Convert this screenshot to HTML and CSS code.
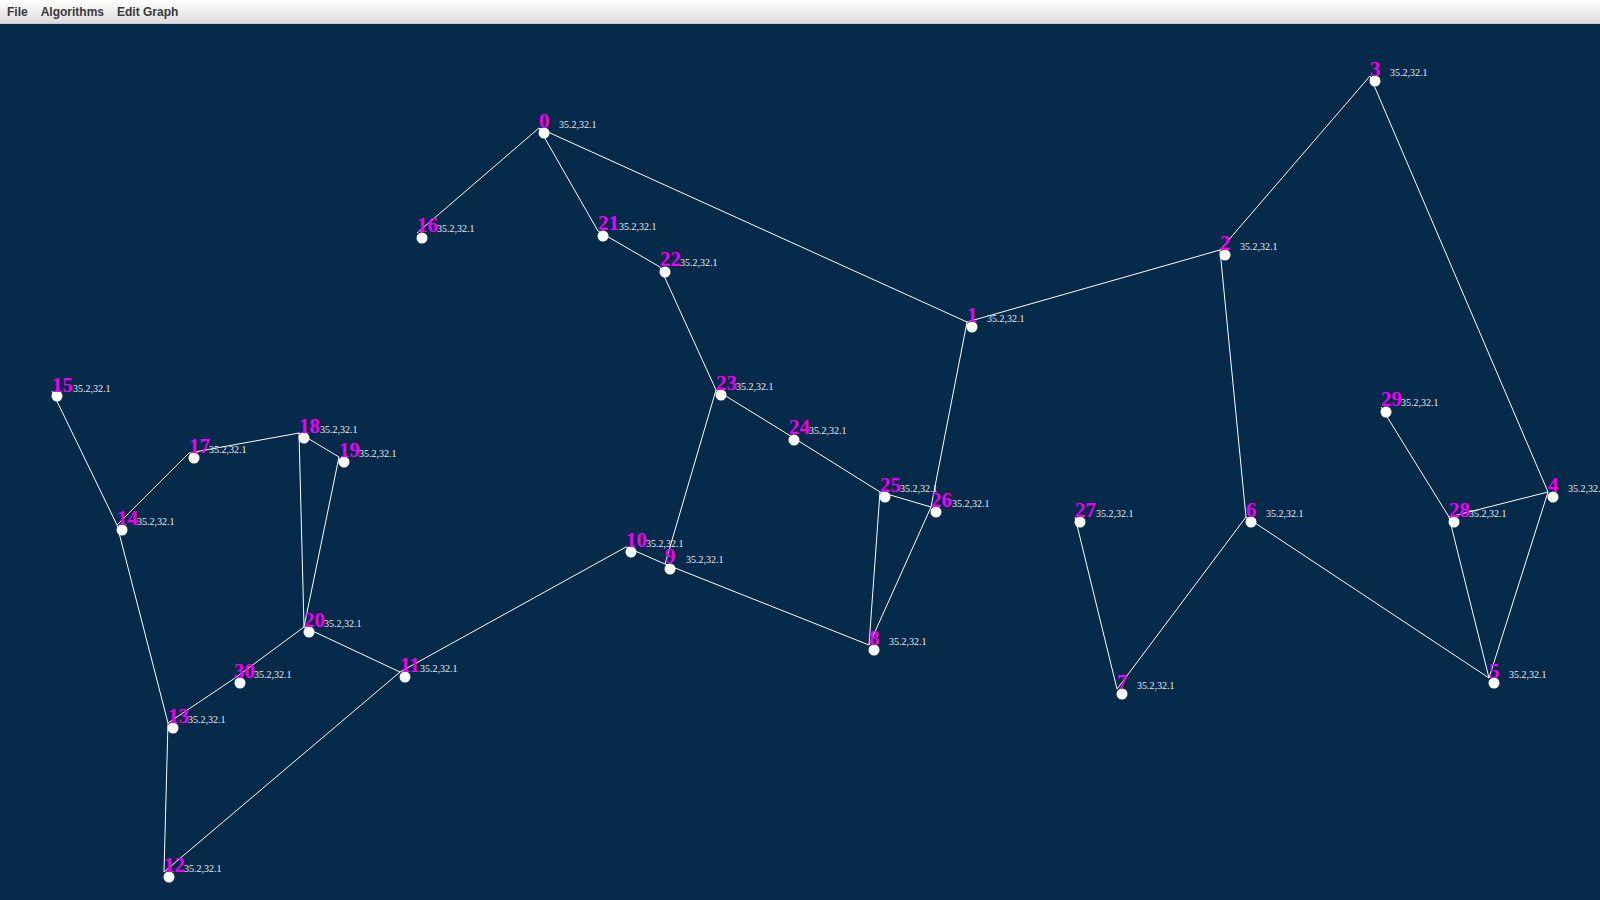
FILE: index.html
```html
<!DOCTYPE html>
<html>
<head>
    <title>Graph</title>
    <link rel="stylesheet" href="styles.css">
</head>
<body>
    <div class="menubar">
        <span class="menu">File</span>
        <span class="menu">Algorithms</span>
        <span class="menu">Edit Graph</span>
    </div>
    <svg class="canvas" viewBox="0 24 1600 876">
        <g class="edges">
            <line x1="539" y1="128" x2="417" y2="233"/>
            <line x1="539" y1="128" x2="598" y2="231"/>
            <line x1="539" y1="128" x2="967" y2="322"/>
            <line x1="598" y1="231" x2="660" y2="267"/>
            <line x1="660" y1="267" x2="716" y2="390"/>
            <line x1="716" y1="390" x2="789" y2="435"/>
            <line x1="789" y1="435" x2="880" y2="492"/>
            <line x1="880" y1="492" x2="931" y2="507"/>
            <line x1="716" y1="390" x2="665" y2="564"/>
            <line x1="626" y1="547" x2="665" y2="564"/>
            <line x1="626" y1="547" x2="400" y2="672"/>
            <line x1="665" y1="564" x2="869" y2="645"/>
            <line x1="869" y1="645" x2="880" y2="492"/>
            <line x1="869" y1="645" x2="931" y2="507"/>
            <line x1="931" y1="507" x2="967" y2="322"/>
            <line x1="967" y1="322" x2="1220" y2="250"/>
            <line x1="1220" y1="250" x2="1370" y2="76"/>
            <line x1="1370" y1="76" x2="1548" y2="492"/>
            <line x1="1220" y1="250" x2="1246" y2="517"/>
            <line x1="1246" y1="517" x2="1117" y2="689"/>
            <line x1="1117" y1="689" x2="1075" y2="517"/>
            <line x1="1246" y1="517" x2="1489" y2="678"/>
            <line x1="1489" y1="678" x2="1548" y2="492"/>
            <line x1="1489" y1="678" x2="1449" y2="517"/>
            <line x1="1449" y1="517" x2="1548" y2="492"/>
            <line x1="1449" y1="517" x2="1381" y2="407"/>
            <line x1="52" y1="391" x2="117" y2="525"/>
            <line x1="117" y1="525" x2="189" y2="453"/>
            <line x1="189" y1="453" x2="299" y2="433"/>
            <line x1="299" y1="433" x2="339" y2="457"/>
            <line x1="299" y1="433" x2="304" y2="627"/>
            <line x1="339" y1="457" x2="304" y2="627"/>
            <line x1="117" y1="525" x2="168" y2="723"/>
            <line x1="304" y1="627" x2="235" y2="678"/>
            <line x1="235" y1="678" x2="168" y2="723"/>
            <line x1="304" y1="627" x2="400" y2="672"/>
            <line x1="400" y1="672" x2="164" y2="872"/>
            <line x1="168" y1="723" x2="164" y2="872"/>
        </g>
        <g class="dots">
            <circle cx="544" cy="133" r="5.5"/>
            <circle cx="972" cy="327" r="5.5"/>
            <circle cx="1225" cy="255" r="5.5"/>
            <circle cx="1375" cy="81" r="5.5"/>
            <circle cx="1553" cy="497" r="5.5"/>
            <circle cx="1494" cy="683" r="5.5"/>
            <circle cx="1251" cy="522" r="5.5"/>
            <circle cx="1122" cy="694" r="5.5"/>
            <circle cx="874" cy="650" r="5.5"/>
            <circle cx="670" cy="569" r="5.5"/>
            <circle cx="631" cy="552" r="5.5"/>
            <circle cx="405" cy="677" r="5.5"/>
            <circle cx="169" cy="877" r="5.5"/>
            <circle cx="173" cy="728" r="5.5"/>
            <circle cx="122" cy="530" r="5.5"/>
            <circle cx="57" cy="396" r="5.5"/>
            <circle cx="422" cy="238" r="5.5"/>
            <circle cx="194" cy="458" r="5.5"/>
            <circle cx="304" cy="438" r="5.5"/>
            <circle cx="344" cy="462" r="5.5"/>
            <circle cx="309" cy="632" r="5.5"/>
            <circle cx="603" cy="236" r="5.5"/>
            <circle cx="665" cy="272" r="5.5"/>
            <circle cx="721" cy="395" r="5.5"/>
            <circle cx="794" cy="440" r="5.5"/>
            <circle cx="885" cy="497" r="5.5"/>
            <circle cx="936" cy="512" r="5.5"/>
            <circle cx="1080" cy="522" r="5.5"/>
            <circle cx="1454" cy="522" r="5.5"/>
            <circle cx="1386" cy="412" r="5.5"/>
            <circle cx="240" cy="683" r="5.5"/>
        </g>
        <g class="coords">
            <text x="559" y="128">35.2,32.1</text>
            <text x="987" y="322">35.2,32.1</text>
            <text x="1240" y="250">35.2,32.1</text>
            <text x="1390" y="76">35.2,32.1</text>
            <text x="1568" y="492">35.2,32.1</text>
            <text x="1509" y="678">35.2,32.1</text>
            <text x="1266" y="517">35.2,32.1</text>
            <text x="1137" y="689">35.2,32.1</text>
            <text x="889" y="645">35.2,32.1</text>
            <text x="686" y="563">35.2,32.1</text>
            <text x="646" y="547">35.2,32.1</text>
            <text x="420" y="672">35.2,32.1</text>
            <text x="184" y="872">35.2,32.1</text>
            <text x="188" y="723">35.2,32.1</text>
            <text x="137" y="525">35.2,32.1</text>
            <text x="73" y="392">35.2,32.1</text>
            <text x="437" y="232">35.2,32.1</text>
            <text x="209" y="453">35.2,32.1</text>
            <text x="320" y="433">35.2,32.1</text>
            <text x="359" y="457">35.2,32.1</text>
            <text x="324" y="627">35.2,32.1</text>
            <text x="619" y="230">35.2,32.1</text>
            <text x="680" y="266">35.2,32.1</text>
            <text x="736" y="390">35.2,32.1</text>
            <text x="809" y="434">35.2,32.1</text>
            <text x="900" y="492">35.2,32.1</text>
            <text x="952" y="507">35.2,32.1</text>
            <text x="1096" y="517">35.2,32.1</text>
            <text x="1469" y="517">35.2,32.1</text>
            <text x="1401" y="406">35.2,32.1</text>
            <text x="254" y="678">35.2,32.1</text>
        </g>
        <g class="numbers">
            <text x="539" y="128">0</text>
            <text x="967" y="322">1</text>
            <text x="1220" y="250">2</text>
            <text x="1370" y="76">3</text>
            <text x="1548" y="492">4</text>
            <text x="1489" y="678">5</text>
            <text x="1246" y="517">6</text>
            <text x="1117" y="689">7</text>
            <text x="869" y="645">8</text>
            <text x="665" y="563">9</text>
            <text x="626" y="547">10</text>
            <text x="400" y="672">11</text>
            <text x="164" y="872">12</text>
            <text x="168" y="723">13</text>
            <text x="117" y="525">14</text>
            <text x="52" y="392">15</text>
            <text x="417" y="232">16</text>
            <text x="189" y="453">17</text>
            <text x="299" y="433">18</text>
            <text x="339" y="457">19</text>
            <text x="304" y="627">20</text>
            <text x="598" y="230">21</text>
            <text x="660" y="266">22</text>
            <text x="716" y="390">23</text>
            <text x="789" y="434">24</text>
            <text x="880" y="492">25</text>
            <text x="931" y="507">26</text>
            <text x="1075" y="517">27</text>
            <text x="1449" y="517">28</text>
            <text x="1381" y="406">29</text>
            <text x="234" y="678">30</text>
        </g>
    </svg>
</body>
</html>
```
FILE: styles.css
```css
* {
    box-sizing: border-box;
}
html, body {
    height: 100%;
}
body {
    margin: 0;
    display: flex;
    flex-direction: column;
    overflow: hidden;
    background-color: #062a4a;
}
.menubar {
    height: 24px;
    flex: none;
    display: flex;
    align-items: center;
    gap: 13px;
    padding: 0 7px;
    background-image: linear-gradient(to bottom, #ffffff, #dcdcdc);
    border-bottom: 1px solid #c8c8c8;
    font-family: "Liberation Sans", Arial, sans-serif;
    font-size: 12px;
    font-weight: bold;
    color: #3a3a3a;
}
.canvas {
    display: block;
    flex: 1;
    width: 100%;
    min-height: 0;
}
.edges line {
    stroke: #ffffff;
    stroke-width: 1;
}
.dots circle {
    fill: #ffffff;
}
.coords text {
    font-family: "Liberation Serif", "Times New Roman", serif;
    font-size: 10px;
    fill: #e8edf2;
}
.numbers text {
    font-family: "Liberation Serif", "Times New Roman", serif;
    font-size: 21px;
    font-weight: bold;
    fill: #f000f0;
}
```
